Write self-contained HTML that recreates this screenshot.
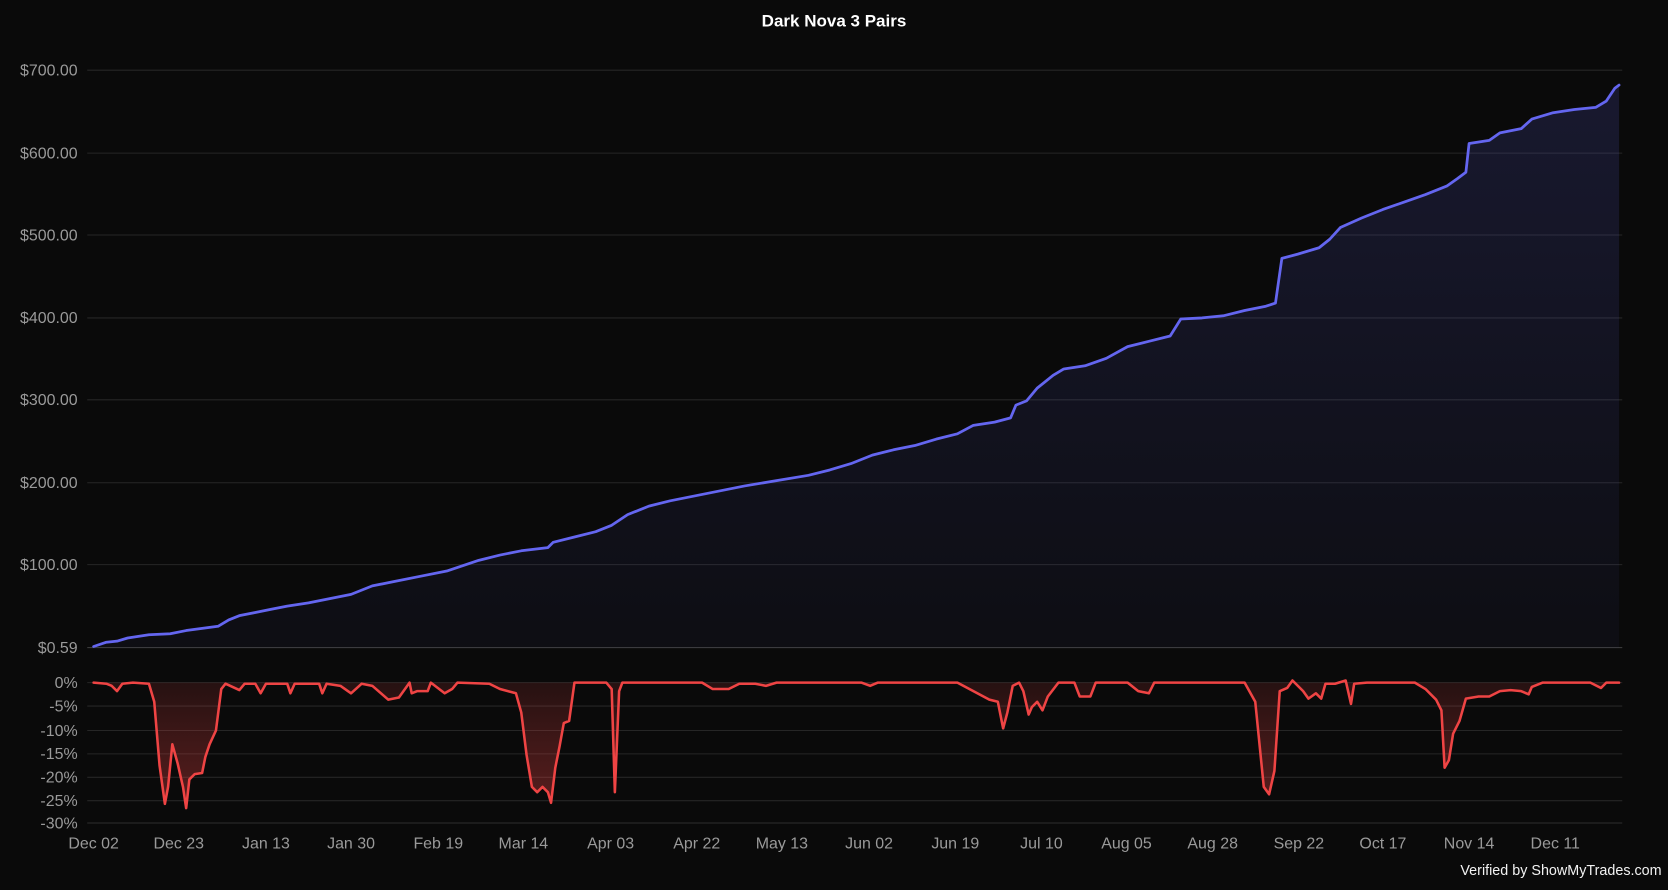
<!DOCTYPE html>
<html><head><meta charset="utf-8"><style>
html,body{margin:0;padding:0;background:#0a0a0a;width:1668px;height:890px;overflow:hidden}
svg{display:block;font-family:"Liberation Sans",sans-serif}
</style></head><body>
<svg width="1668" height="890" viewBox="0 0 1568 837" preserveAspectRatio="none">
<defs>
<linearGradient id="gb" x1="0" y1="0" x2="0" y2="1"><stop offset="0" stop-color="#6366f1" stop-opacity="0.16"/><stop offset="1" stop-color="#6366f1" stop-opacity="0.04"/></linearGradient>
<linearGradient id="gr" x1="0" y1="0" x2="0" y2="1"><stop offset="0" stop-color="#ef4444" stop-opacity="0.12"/><stop offset="1" stop-color="#ef4444" stop-opacity="0.35"/></linearGradient>
</defs>
<rect width="1568" height="837" fill="#0a0a0a"/>
<text x="784" y="25" fill="#fff" font-size="16" font-weight="bold" text-anchor="middle">Dark Nova 3 Pairs</text>
<g stroke="#262626" stroke-width="1">
<line x1="82" x2="1525" y1="66" y2="66"/><line x1="82" x2="1525" y1="144" y2="144"/><line x1="82" x2="1525" y1="221" y2="221"/><line x1="82" x2="1525" y1="299" y2="299"/><line x1="82" x2="1525" y1="376" y2="376"/><line x1="82" x2="1525" y1="454" y2="454"/><line x1="82" x2="1525" y1="531" y2="531"/>
<line x1="82" x2="1525" y1="642" y2="642"/><line x1="82" x2="1525" y1="664" y2="664"/><line x1="82" x2="1525" y1="687" y2="687"/><line x1="82" x2="1525" y1="709" y2="709"/><line x1="82" x2="1525" y1="731" y2="731"/><line x1="82" x2="1525" y1="753" y2="753"/>
</g>
<line x1="82" x2="1525" y1="609" y2="609" stroke="#3a3a3a"/>
<line x1="82" x2="1525" y1="774" y2="774" stroke="#2e2e2e"/>
<g fill="#9a9a9a" font-size="15" text-anchor="end">
<text x="73" y="71">$700.00</text><text x="73" y="149">$600.00</text><text x="73" y="226">$500.00</text><text x="73" y="304">$400.00</text><text x="73" y="381">$300.00</text><text x="73" y="459">$200.00</text><text x="73" y="536">$100.00</text><text x="73" y="614">$0.59</text>
<text x="73" y="647">0%</text><text x="73" y="669">-5%</text><text x="73" y="692">-10%</text><text x="73" y="714">-15%</text><text x="73" y="736">-20%</text><text x="73" y="758">-25%</text><text x="73" y="779">-30%</text>
</g>
<g fill="#9a9a9a" font-size="15" text-anchor="middle">
<text x="88" y="798">Dec 02</text><text x="168" y="798">Dec 23</text><text x="250" y="798">Jan 13</text><text x="330" y="798">Jan 30</text><text x="412" y="798">Feb 19</text><text x="492" y="798">Mar 14</text><text x="574" y="798">Apr 03</text><text x="655" y="798">Apr 22</text><text x="735" y="798">May 13</text><text x="817" y="798">Jun 02</text><text x="898" y="798">Jun 19</text><text x="979" y="798">Jul 10</text><text x="1059" y="798">Aug 05</text><text x="1140" y="798">Aug 28</text><text x="1221" y="798">Sep 22</text><text x="1300" y="798">Oct 17</text><text x="1381" y="798">Nov 14</text><text x="1462" y="798">Dec 11</text>
</g>
<g id="eq">
<polygon fill="url(#gb)" points="88,609 88,608 100,604 110,603 120,600 140,597 160,596 175,593 190,591 205,589 215,583 225,579 240,576 255,573 270,570 290,567 310,563 330,559 350,551 370,547 395,542 420,537 450,527 470,522 490,518 515,515 520,510 540,505 560,500 575,494 590,484 610,476 630,471 650,467 680,461 700,457 730,452 760,447 780,442 800,436 820,428 840,423 860,419 880,413 900,408 915,400 935,397 950,393 955,381 965,377 975,365 990,353 1000,347 1020,344 1040,337 1060,326 1080,321 1100,316 1110,300 1130,299 1150,297 1170,292 1190,288 1199,285 1205,243 1220,239 1240,233 1250,225 1260,214 1280,205 1300,197 1320,190 1340,183 1360,175 1370,168 1378,162 1381,135 1400,132 1410,125 1430,121 1440,112 1460,106 1480,103 1500,101 1510,95 1518,83 1522,80 1522,609"/>
<polyline fill="none" stroke="#6466f0" stroke-width="2.6" stroke-linejoin="round" stroke-linecap="round" points="88,608 100,604 110,603 120,600 140,597 160,596 175,593 190,591 205,589 215,583 225,579 240,576 255,573 270,570 290,567 310,563 330,559 350,551 370,547 395,542 420,537 450,527 470,522 490,518 515,515 520,510 540,505 560,500 575,494 590,484 610,476 630,471 650,467 680,461 700,457 730,452 760,447 780,442 800,436 820,428 840,423 860,419 880,413 900,408 915,400 935,397 950,393 955,381 965,377 975,365 990,353 1000,347 1020,344 1040,337 1060,326 1080,321 1100,316 1110,300 1130,299 1150,297 1170,292 1190,288 1199,285 1205,243 1220,239 1240,233 1250,225 1260,214 1280,205 1300,197 1320,190 1340,183 1360,175 1370,168 1378,162 1381,135 1400,132 1410,125 1430,121 1440,112 1460,106 1480,103 1500,101 1510,95 1518,83 1522,80"/>
</g>
<g>
<polygon fill="url(#gr)" points="88,642 100,643 105,645 110,650 115,643 125,642 140,643 145,660 150,720 155,756 158,740 162,700 167,718 172,740 175,760 178,733 183,728 190,727 193,712 197,700 203,687 208,648 212,643 225,649 230,643 240,643 245,652 250,643 270,643 273,652 277,643 300,643 303,652 307,643 320,645 330,652 340,643 350,645 365,658 375,656 385,642 387,652 392,650 402,650 405,642 418,652 425,648 430,642 460,643 470,648 485,652 490,670 495,710 500,740 505,745 510,740 515,745 518,755 522,722 526,702 530,680 535,678 540,642 570,642 575,648 578,745 582,650 585,642 660,642 670,648 685,648 695,643 710,643 720,645 730,642 810,642 818,645 825,642 900,642 915,650 930,658 938,660 943,685 947,670 952,645 958,642 962,650 967,672 970,665 975,660 980,668 985,655 995,642 1010,642 1015,655 1025,655 1030,642 1060,642 1070,650 1080,652 1085,642 1170,642 1180,660 1188,740 1193,747 1198,725 1203,650 1210,647 1215,640 1225,650 1230,657 1237,652 1242,657 1246,643 1255,643 1265,640 1270,662 1273,643 1285,642 1330,642 1340,648 1350,658 1355,668 1358,722 1362,715 1366,690 1372,678 1378,657 1390,655 1400,655 1410,650 1420,649 1430,650 1437,653 1440,646 1450,642 1495,642 1505,647 1510,642 1522,642"/>
<polyline fill="none" stroke="#ef4444" stroke-width="2.4" stroke-linejoin="round" stroke-linecap="round" points="88,642 100,643 105,645 110,650 115,643 125,642 140,643 145,660 150,720 155,756 158,740 162,700 167,718 172,740 175,760 178,733 183,728 190,727 193,712 197,700 203,687 208,648 212,643 225,649 230,643 240,643 245,652 250,643 270,643 273,652 277,643 300,643 303,652 307,643 320,645 330,652 340,643 350,645 365,658 375,656 385,642 387,652 392,650 402,650 405,642 418,652 425,648 430,642 460,643 470,648 485,652 490,670 495,710 500,740 505,745 510,740 515,745 518,755 522,722 526,702 530,680 535,678 540,642 570,642 575,648 578,745 582,650 585,642 660,642 670,648 685,648 695,643 710,643 720,645 730,642 810,642 818,645 825,642 900,642 915,650 930,658 938,660 943,685 947,670 952,645 958,642 962,650 967,672 970,665 975,660 980,668 985,655 995,642 1010,642 1015,655 1025,655 1030,642 1060,642 1070,650 1080,652 1085,642 1170,642 1180,660 1188,740 1193,747 1198,725 1203,650 1210,647 1215,640 1225,650 1230,657 1237,652 1242,657 1246,643 1255,643 1265,640 1270,662 1273,643 1285,642 1330,642 1340,648 1350,658 1355,668 1358,722 1362,715 1366,690 1372,678 1378,657 1390,655 1400,655 1410,650 1420,649 1430,650 1437,653 1440,646 1450,642 1495,642 1505,647 1510,642 1522,642"/>
</g>
<text x="1562" y="823" fill="#f2f2f2" font-size="13.5" text-anchor="end">Verified by ShowMyTrades.com</text>
</svg>
</body></html>
